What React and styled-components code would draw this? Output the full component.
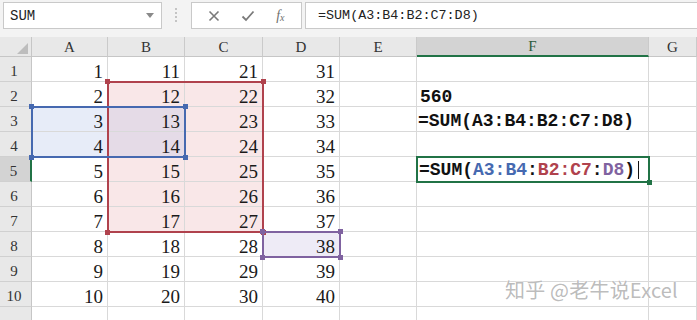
import React from "react";
import styled, { createGlobalStyle } from "styled-components";

const GlobalStyle = createGlobalStyle`
  html, body {
    margin: 0;
    padding: 0;
    background: #ffffff;
    overflow: hidden;
  }
  * {
    box-sizing: border-box;
  }
`;

// column left edges: corner, A..G
const colX = [0, 32, 108, 185, 263, 340, 417, 649, 697];
const HEAD_H = 20;
const ROW_H = 25;
const COLS = ["A", "B", "C", "D", "E", "F", "G"];
const ROWS = [1, 2, 3, 4, 5, 6, 7, 8, 9, 10, 11];

const BLUE = "#4669b0";
const RED = "#b0424d";
const PURPLE = "#7f62a0";
const GREEN = "#217346";

const Page = styled.div`
  position: relative;
  width: 697px;
  height: 320px;
  overflow: hidden;
  font-family: "Liberation Serif", "Times New Roman", serif;
`;

const Toolbar = styled.div`
  height: 37px;
  background: #f3f3f3;
  display: flex;
  align-items: flex-start;
  padding: 2px 0 0 3px;
`;

const NameBox = styled.div`
  width: 159px;
  height: 27px;
  background: #fff;
  border: 1px solid #c9c9c9;
  display: flex;
  align-items: center;
  justify-content: space-between;
  padding: 0 6px 0 6px;
  font-family: "Liberation Mono", monospace;
  font-size: 14px;
  color: #222;
`;

const Caret = styled.span`
  width: 0;
  height: 0;
  border-left: 4px solid transparent;
  border-right: 4px solid transparent;
  border-top: 5px solid #8a8a8a;
  margin-right: 1px;
`;

const Grip = styled.div`
  width: 2px;
  height: 14px;
  margin: 6px 14px 0 13px;
  border-left: 2px dotted #c4c4c4;
`;

const FxButtons = styled.div`
  width: 111px;
  height: 27px;
  background: #fff;
  border: 1px solid #c9c9c9;
  display: flex;
  align-items: center;
  justify-content: space-around;
  padding: 0 6px;
  color: #7a7a7a;
`;

const FxGlyph = styled.span`
  font-family: "Liberation Serif", serif;
  font-style: italic;
  font-size: 14px;
  color: #6f6f6f;
  & sub {
    font-size: 10px;
    vertical-align: -1px;
  }
`;

const FormulaInput = styled.div`
  flex: 1;
  height: 27px;
  margin-left: 3px;
  background: #fff;
  border: 1px solid #c9c9c9;
  border-right: none;
  display: flex;
  align-items: center;
  padding-left: 12px;
  font-family: "Liberation Mono", monospace;
  font-size: 13.4px;
  color: #222;
`;

const Sheet = styled.div`
  position: relative;
  display: grid;
  grid-template-columns: 32px 76px 77px 78px 77px 77px 232px 1fr;
  grid-template-rows: ${HEAD_H}px repeat(11, ${ROW_H}px);
`;

const Corner = styled.div`
  background: #e8e8e8;
  border-right: 1px solid #c6c6c6;
  border-bottom: 1px solid #c6c6c6;
  position: relative;
`;

const ColHead = styled.div`
  background: ${(p) => (p.$active ? "#d3d3d3" : "#e8e8e8")};
  border-right: 1px solid #cacaca;
  border-bottom: ${(p) => (p.$active ? `2px solid ${GREEN}` : "1px solid #c6c6c6")};
  display: flex;
  align-items: center;
  justify-content: center;
  font-size: 15px;
  color: ${(p) => (p.$active ? "#2a5a3c" : "#333")};
  padding-top: 1px;
`;

const RowHead = styled.div`
  background: ${(p) => (p.$active ? "#d3d3d3" : "#e8e8e8")};
  border-right: ${(p) => (p.$active ? `2px solid ${GREEN}` : "1px solid #c6c6c6")};
  border-bottom: 1px solid #d0d0d0;
  display: flex;
  align-items: flex-end;
  justify-content: center;
  padding: 0 3px 2px 0;
  font-size: 15px;
  line-height: 15px;
  color: #333;
`;

const Cell = styled.div`
  background: ${(p) => p.$tint || "#fff"};
  border-right: 1px solid #d9d9d9;
  border-bottom: 1px solid #d9d9d9;
  display: flex;
  align-items: flex-end;
  justify-content: flex-end;
  padding: 0 4px 0 0;
  font-size: 19px;
  line-height: 19px;
  color: #1a1a1a;
  white-space: nowrap;
`;

const TextCell = styled(Cell)`
  justify-content: flex-start;
  padding: 0 0 ${(p) => p.$pb || 0}px ${(p) => p.$pl || 2}px;
  font-family: "Liberation Mono", monospace;
  font-weight: bold;
  font-size: 18px;
  line-height: 18px;
  color: #111;
`;

const Ref = styled.span`
  color: ${(p) => p.$color};
`;

const Cursor = styled.span`
  display: inline-block;
  width: 1px;
  height: 18px;
  background: #111;
  margin-left: 3px;
  vertical-align: -4px;
`;

const Range = styled.div`
  position: absolute;
  border: 2px solid ${(p) => p.$color};
  pointer-events: none;
`;

const Handle = styled.span`
  position: absolute;
  width: 5px;
  height: 5px;
  background: ${(p) => p.$color};
  ${(p) => (p.$right ? "right: -4px;" : "left: -4px;")}
  ${(p) => (p.$bottom ? "bottom: -4px;" : "top: -4px;")}
`;

const Watermark = styled.div`
  position: absolute;
  right: 19px;
  bottom: 16px;
  font-family: "Noto Sans CJK SC", "Noto Sans", sans-serif;
  font-size: 20px;
  color: rgba(150, 150, 150, 0.65);
  text-shadow: 0 0 1px #fff, 0 0 2px #fff;
  letter-spacing: 0.2px;
  pointer-events: none;
`;

const tintOf = (c, r) => {
  if (c === "A" && (r === 3 || r === 4)) return "#e7ecf8";
  if (c === "B" && (r === 3 || r === 4)) return "#e5dbe7";
  if ((c === "B" || c === "C") && r >= 2 && r <= 7) return "#f9e7e8";
  if (c === "D" && r === 8) return "#eeebf6";
  return null;
};

const valueOf = (c, r) => {
  const base = { A: 0, B: 10, C: 20, D: 30 }[c];
  if (base === undefined || r > 10) return "";
  return base + r;
};

const rowTop = (r) => HEAD_H + (r - 1) * ROW_H;

const box = (c1, r1, c2, r2) => {
  const x1 = colX[COLS.indexOf(c1) + 1];
  const x2 = colX[COLS.indexOf(c2) + 2];
  const y1 = rowTop(r1);
  const y2 = rowTop(r2 + 1);
  return { left: x1 - 1, top: y1 - 1, width: x2 - x1 + 2, height: y2 - y1 + 2 };
};

const ranges = [
  { color: RED, rect: box("B", 2, "C", 7), handles: ["tl", "tr", "bl", "br"] },
  { color: BLUE, rect: box("A", 3, "B", 4), handles: ["tl", "tr", "bl", "br"] },
  { color: PURPLE, rect: box("D", 8, "D", 8), handles: ["tl", "tr", "bl", "br"] },
  { color: GREEN, rect: box("F", 5, "F", 5), handles: ["br"] },
];

const XIcon = () => (
  <svg width="12" height="12" viewBox="0 0 12 12">
    <path d="M1.5 1.5 L10.5 10.5 M10.5 1.5 L1.5 10.5" stroke="#7a7a7a" strokeWidth="1.6" fill="none" />
  </svg>
);

const CheckIcon = () => (
  <svg width="14" height="12" viewBox="0 0 14 12">
    <path d="M1.5 6.5 L5 10 L12.5 1.5" stroke="#7a7a7a" strokeWidth="1.8" fill="none" />
  </svg>
);

const CornerTri = () => (
  <svg width="32" height="20" viewBox="0 0 32 20" style={{ position: "absolute", left: 0, top: 0 }}>
    <polygon points="17,17 28,6 28,17" fill="#bdbdbd" />
  </svg>
);

const ActiveFormula = () => (
  <>
    =SUM(
    <Ref $color={BLUE}>A3:B4</Ref>:
    <Ref $color={RED}>B2:C7</Ref>:
    <Ref $color={PURPLE}>D8</Ref>)
    <Cursor />
  </>
);

const renderCell = (c, r) => {
  const key = `${c}${r}`;
  if (c === "F" && r === 2) {
    return (
      <TextCell key={key} $pl={3} $pb={0}>
        560
      </TextCell>
    );
  }
  if (c === "F" && r === 3) {
    return (
      <TextCell key={key} $pl={1} $pb={1}>
        =SUM(A3:B4:B2:C7:D8)
      </TextCell>
    );
  }
  if (c === "F" && r === 5) {
    return (
      <TextCell key={key} $pl={2} $pb={2}>
        <ActiveFormula />
      </TextCell>
    );
  }
  return (
    <Cell key={key} $tint={tintOf(c, r)}>
      {valueOf(c, r)}
    </Cell>
  );
};

const App = () => {
  return (
    <Page>
      <GlobalStyle />
      <Toolbar>
        <NameBox>
          SUM
          <Caret />
        </NameBox>
        <Grip />
        <FxButtons>
          <XIcon />
          <CheckIcon />
          <FxGlyph>
            f<sub>x</sub>
          </FxGlyph>
        </FxButtons>
        <FormulaInput>=SUM(A3:B4:B2:C7:D8)</FormulaInput>
      </Toolbar>

      <Sheet>
        <Corner>
          <CornerTri />
        </Corner>
        {COLS.map((c) => (
          <ColHead key={c} $active={c === "F"}>
            {c}
          </ColHead>
        ))}
        {ROWS.map((r) => (
          <React.Fragment key={r}>
            <RowHead $active={r === 5}>{r <= 10 ? r : ""}</RowHead>
            {COLS.map((c) => renderCell(c, r))}
          </React.Fragment>
        ))}

        {ranges.map((rg, i) => (
          <Range key={i} $color={rg.color} style={rg.rect}>
            {rg.handles.map((h) => (
              <Handle key={h} $color={rg.color} $right={h[1] === "r"} $bottom={h[0] === "b"} />
            ))}
          </Range>
        ))}
      </Sheet>

      <Watermark>知乎 @老牛说Excel</Watermark>
    </Page>
  );
};

export default App;
